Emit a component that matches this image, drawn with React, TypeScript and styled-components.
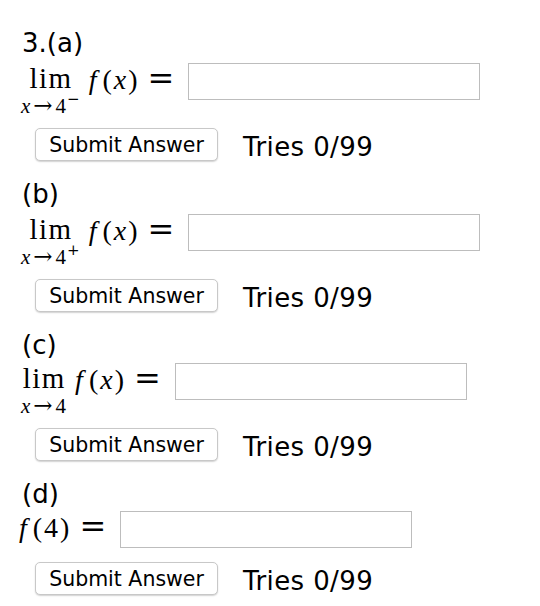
import React from "react";
import styled, { createGlobalStyle } from "styled-components";

const Global = createGlobalStyle`
  html, body { margin: 0; padding: 0; background: #fff; }
  body { color: #000; }
`;

const Page = styled.div`
  padding: 29px 0 0 21px;
  display: flex;
  flex-direction: column;
`;

const Part = styled.section`
  display: flex;
  flex-direction: column;
  margin-bottom: 18px;
`;

const Label = styled.div`
  font-family: "DejaVu Sans", Verdana, sans-serif;
  font-size: 26px;
  line-height: 28px;
  margin-left: 1px;
`;

const MathRow = styled.div<{ $top: number }>`
  display: flex;
  align-items: flex-start;
  margin-top: ${(p) => p.$top}px;
  font-family: "Liberation Serif", "Times New Roman", serif;
`;

const LimitBlock = styled.div<{ $right: number }>`
  display: flex;
  flex-direction: column;
  align-items: center;
  margin-right: ${(p) => p.$right}px;
`;

const LimWord = styled.div`
  font-size: 29px;
  line-height: 28px;
  margin-top: 1px;
  letter-spacing: 1.5px;
  padding-left: 1.5px;
`;

const Under = styled.div<{ $gap: number }>`
  font-size: 21px;
  line-height: 20px;
  margin-top: ${(p) => p.$gap}px;
  white-space: nowrap;
`;

const Var = styled.i`
  font-style: italic;
`;

const Arrow = styled.span`
  font-family: "DejaVu Serif", serif;
  font-size: 23px;
  margin: 0 3px 0 3px;
`;

const Sup = styled.sup`
  font-family: "DejaVu Serif", serif;
  font-size: 15px;
  line-height: 0;
  vertical-align: 9px;
  margin-left: 1px;
`;

const Expression = styled.div<{ $shift?: number }>`
  display: flex;
  align-items: baseline;
  font-size: 28px;
  line-height: 28px;
  margin-top: 1px;
  margin-left: ${(p) => p.$shift ?? 0}px;
  white-space: nowrap;
`;

const Fn = styled.i`
  font-style: italic;
  margin-right: 4px;
`;

const Paren = styled.span`
  margin: 0 2px;
`;

const Eq = styled.span`
  font-family: "DejaVu Serif", serif;
  font-size: 32px;
  margin: 0 14px 0 8px;
`;

const AnswerBox = styled.input`
  box-sizing: border-box;
  width: 292px;
  height: 37px;
  margin: 0;
  border: 1px solid #bdbdbd;
  border-radius: 0;
  background: #fff;
  outline: none;
`;

const ButtonRow = styled.div<{ $top: number }>`
  display: flex;
  align-items: flex-start;
  gap: 25px;
  padding-left: 14px;
  margin-top: ${(p) => p.$top}px;
`;

const SubmitButton = styled.button`
  box-sizing: border-box;
  height: 33px;
  width: 183px;
  padding: 0;
  font-family: "DejaVu Sans", Verdana, sans-serif;
  font-size: 20.5px;
  color: #000;
  background: #fff;
  border: 1px solid #c8c8c8;
  border-radius: 5px;
  box-shadow: 0 1px 1.5px rgba(0, 0, 0, 0.18);
`;

const Tries = styled.span`
  font-family: "DejaVu Sans", Verdana, sans-serif;
  font-size: 26px;
  line-height: 30px;
  letter-spacing: 0.4px;
  margin-top: 4px;
`;

type Item = {
  label: string;
  kind: "lim" | "value";
  sup?: string;
  underGap?: number;
  rowTop: number;
  buttonTop: number;
  blockRight?: number;
};

const items: Item[] = [
  { label: "3.(a)", kind: "lim", sup: "−", underGap: 3, rowTop: 6, buttonTop: 12, blockRight: 9 },
  { label: "(b)", kind: "lim", sup: "+", underGap: 3, rowTop: 6, buttonTop: 12, blockRight: 9 },
  { label: "(c)", kind: "lim", underGap: 3, rowTop: 4, buttonTop: 12, blockRight: 9 },
  { label: "(d)", kind: "value", rowTop: 3, buttonTop: 14 },
];

export default function App() {
  return (
    <>
      <Global />
      <Page>
        {items.map((it) => (
          <Part key={it.label}>
            <Label>{it.label}</Label>
            <MathRow $top={it.rowTop}>
              {it.kind === "lim" ? (
                <>
                  <LimitBlock $right={it.blockRight ?? 8}>
                    <LimWord>lim</LimWord>
                    <Under $gap={it.underGap ?? 3}>
                      <Var>x</Var>
                      <Arrow>→</Arrow>4{it.sup && <Sup>{it.sup}</Sup>}
                    </Under>
                  </LimitBlock>
                  <Expression>
                    <Fn>f</Fn>
                    <Paren>(</Paren>
                    <Var>x</Var>
                    <Paren>)</Paren>
                    <Eq>=</Eq>
                  </Expression>
                </>
              ) : (
                <Expression $shift={-2}>
                  <Fn>f</Fn>
                  <Paren>(</Paren>4<Paren>)</Paren>
                  <Eq>=</Eq>
                </Expression>
              )}
              <AnswerBox type="text" aria-label={`answer ${it.label}`} />
            </MathRow>
            <ButtonRow $top={it.buttonTop}>
              <SubmitButton type="button">Submit Answer</SubmitButton>
              <Tries>Tries 0/99</Tries>
            </ButtonRow>
          </Part>
        ))}
      </Page>
    </>
  );
}
